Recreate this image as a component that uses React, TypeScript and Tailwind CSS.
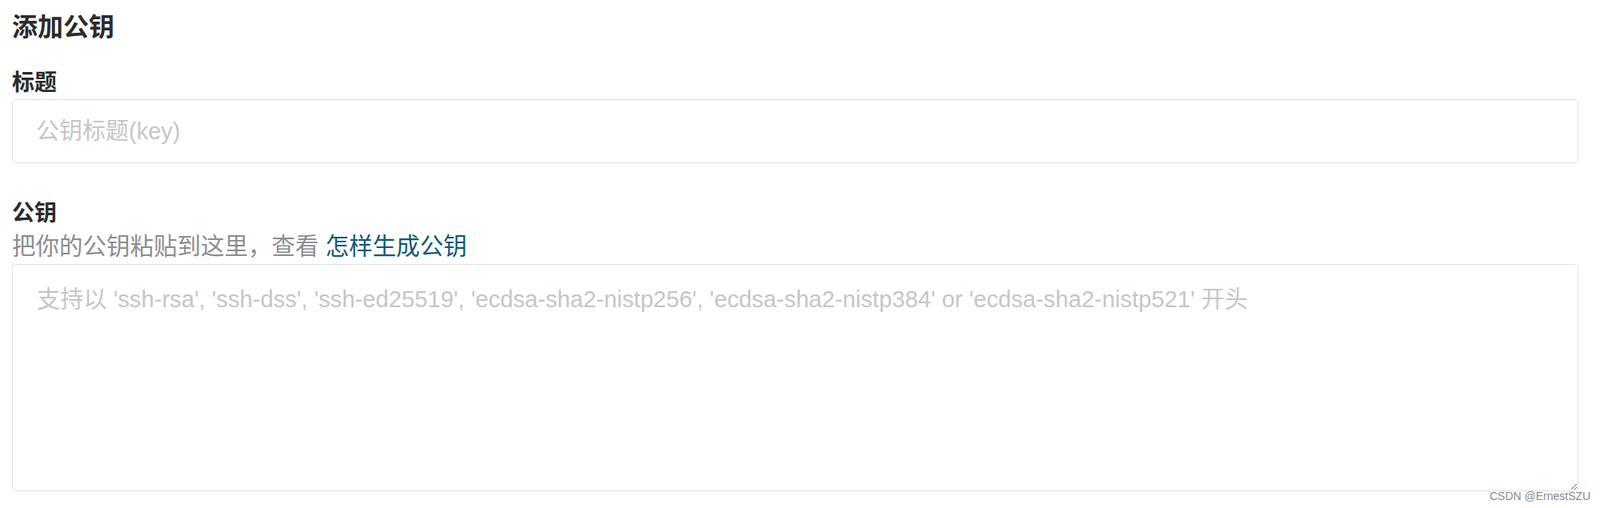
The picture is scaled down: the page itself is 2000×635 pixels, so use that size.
import React from "react";

const font = { fontFamily: '"Liberation Sans", "Noto Sans CJK SC", sans-serif' };

export default function App() {
  return (
    <main
      className="relative min-h-[635px] w-[2000px] bg-white pl-[15px] pr-[27px] pt-[14px] text-[#333]"
      style={font}
    >
      <h1 className="text-[32px] font-bold leading-[40px] text-[#2b2b2b]">添加公钥</h1>

      {/* 标题 */}
      <label className="mt-[32px] block text-[28px] font-bold leading-[36px] text-[#2b2b2b]">标题</label>
      <input
        type="text"
        placeholder="公钥标题(key)"
        className="mt-[2px] block h-[80px] w-full rounded-[5px] border border-[#e2e2e2] bg-white px-[29px] text-[29px] text-[#333] outline-none placeholder:text-[#c6c6c6]"
      />

      {/* 公钥 */}
      <label className="mt-[45px] block text-[28px] font-bold leading-[36px] text-[#2b2b2b]">公钥</label>
      <p className="mt-[5px] text-[29.5px] leading-[36px] text-[#8c8c8c]">
        把你的公钥粘贴到这里，查看 <a className="text-[#0f5876]">怎样生成公钥</a>
      </p>
      <textarea
        placeholder="支持以 'ssh-rsa', 'ssh-dss', 'ssh-ed25519', 'ecdsa-sha2-nistp256', 'ecdsa-sha2-nistp384' or 'ecdsa-sha2-nistp521' 开头"
        className="mt-[4px] block h-[284px] w-full rounded-[5px] border border-[#e2e2e2] bg-white px-[30px] pb-[19px] pt-[23px] text-[29.2px] leading-[40px] text-[#333] outline-none placeholder:text-[#c6c6c6]"
      />

      {/* watermark */}
      <span className="absolute left-[1862px] top-[611px] text-[14px] leading-[18px] text-[#8a8a8a]">
        CSDN @ErnestSZU
      </span>
    </main>
  );
}
